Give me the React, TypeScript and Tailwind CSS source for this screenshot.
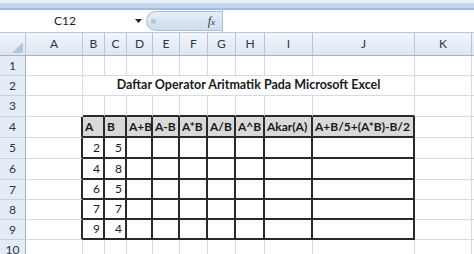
import React from "react";

const cols = ["A", "B", "C", "D", "E", "F", "G", "H", "I", "J", "K"];
const rowH = [20, 20, 21, 21, 21, 21, 20, 20, 20, 20];
const heads = ["A", "B", "A+B", "A-B", "A*B", "A/B", "A^B", "Akar(A)", "A+B/5+(A*B)-B/2"];
const data: [number, number][] = [
  [2, 5],
  [4, 8],
  [6, 5],
  [7, 7],
  [9, 4],
];

const grid = "grid grid-cols-[26px_57px_22px_22px_26px_27px_28px_28px_29px_48px_102px_57px_1fr]";

function Cell({ r, c }: { r: number; c: number }) {
  // r: 1..10, c: 1..12 (1=A)
  const inTable = r >= 4 && r <= 9 && c >= 2 && c <= 10;
  const leftOfTable = r >= 4 && r <= 9 && c === 1;
  const aboveTable = r === 3 && c >= 2 && c <= 10;
  const right = inTable || leftOfTable ? "border-r-2 border-r-[#2a2a2a]" : "border-r border-r-[#d4dbe6]";
  const bottom = inTable || aboveTable ? "border-b-2 border-b-[#2a2a2a]" : "border-b border-b-[#d4dbe6]";
  let content: React.ReactNode = null;
  let cls = "";
  if (r === 4 && inTable) {
    content = heads[c - 2];
    cls = "bg-[#d9d9d9] font-bold justify-start pl-[2px]";
  } else if (r >= 5 && r <= 9 && (c === 2 || c === 3)) {
    content = data[r - 5][c - 2];
    cls = "justify-end pr-[3px]";
  }
  return (
    <div className={`flex items-center ${right} ${bottom} ${cls}`} style={{ height: rowH[r - 1] }}>
      {content}
    </div>
  );
}

export default function App() {
  return (
    <div className="w-[474px] h-[254px] overflow-hidden bg-white text-[#1a1a1a]" style={{ fontFamily: "Lato, 'Open Sans', sans-serif", fontSize: "12px" }}>
      {/* ribbon bottom */}
      <div className="h-[3px] bg-[#e9eff8]" />
      <div className="h-[5px] bg-[#c4d6ee]" />
      <div className="h-[2px] bg-[#9fbbe0]" />
      {/* formula bar */}
      <div className="h-[23px] flex border-b border-[#b9c9de] bg-white">
        <div className="w-[130px] flex items-center justify-center text-[12px] text-[#222]">C12</div>
        <div className="w-[16px] flex items-center justify-center">
          <svg width="7" height="4" viewBox="0 0 7 4"><path d="M0 0 H7 L3.5 4 Z" fill="#222" /></svg>
        </div>
        <div className="w-[76px] my-[1px] rounded-l-full bg-gradient-to-b from-[#e6eef8] to-[#cfdcee] border border-[#aabfdc] border-r-0 flex items-center">
          <div className="ml-[4px] w-[5px] h-[5px] rounded-full bg-[#b8c4d2]" />
          <span className="ml-auto mr-[7px] italic text-[12px] text-[#333]" style={{ fontFamily: "'Liberation Serif', serif" }}>
            f<span className="text-[9px]">x</span>
          </span>
        </div>
        <div className="flex-1 border-l border-[#aabfdc]" />
      </div>
      {/* column headers */}
      <div className={`${grid} h-[23px] bg-gradient-to-b from-[#f1f5fb] to-[#dde6f2] border-b border-[#9eb6ce] text-[#27384c]`}>
        <div className="relative border-r border-[#b6c6da]">
          <svg className="absolute right-[2px] bottom-[2px]" width="11" height="11" viewBox="0 0 11 11">
            <path d="M11 0 V11 H0 Z" fill="#b7c6d9" />
          </svg>
        </div>
        {cols.map((c) => (
          <div key={c} className="flex items-center justify-center border-r border-[#b6c6da]">
            {c}
          </div>
        ))}
        <div />
      </div>
      {/* rows */}
      {rowH.map((h, i) => {
        const r = i + 1;
        return (
          <div key={r} className={grid}>
            <div className="flex items-center justify-center bg-[#e4ecf7] border-r border-r-[#9eb6ce] border-b border-b-[#c5d2e3] text-[#27384c]" style={{ height: h }}>
              {r}
            </div>
            {r === 2 ? (
              <>
                <div className="border-r border-b border-[#d4dbe6]" />
                <div className="col-span-9 flex items-center justify-center font-bold border-r border-b border-[#d4dbe6] text-[12.5px]">
                  Daftar Operator Aritmatik Pada Microsoft Excel
                </div>
                <div className="border-r border-b border-[#d4dbe6]" />
                <div className="border-b border-[#d4dbe6]" />
              </>
            ) : (
              <>
                {Array.from({ length: 11 }, (_, k) => (
                  <Cell key={k} r={r} c={k + 1} />
                ))}
                <div className="border-b border-[#d4dbe6]" />
              </>
            )}
          </div>
        );
      })}
    </div>
  );
}
